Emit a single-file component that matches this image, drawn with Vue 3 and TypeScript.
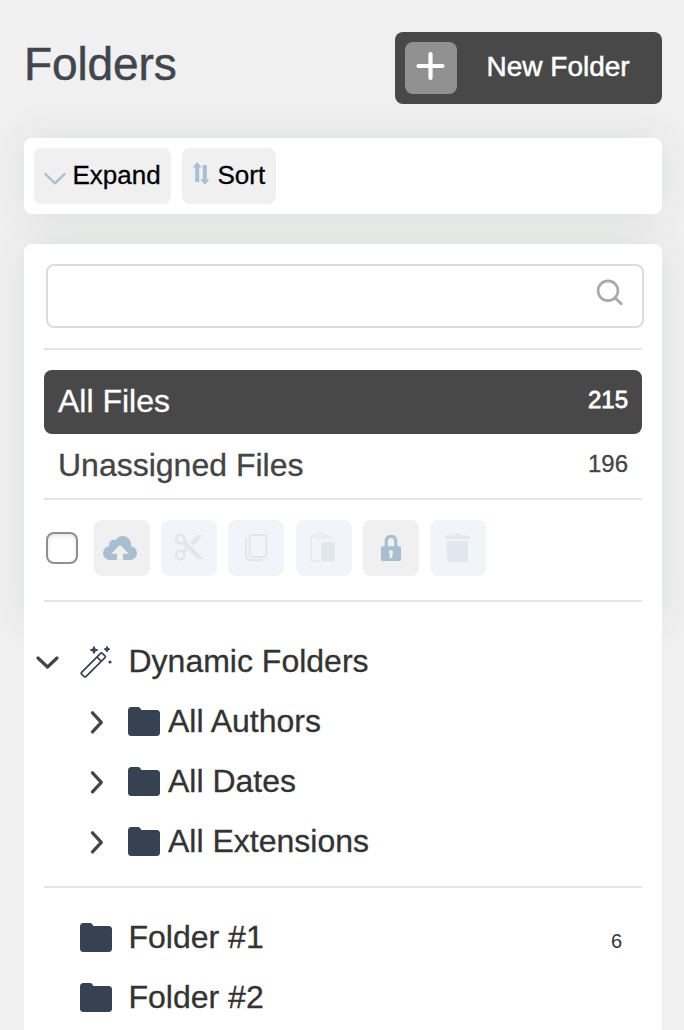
<script setup lang="ts">
interface TreeItem {
  name: string
  count?: number
}

const dynamicChildren: TreeItem[] = [
  { name: 'All Authors' },
  { name: 'All Dates' },
  { name: 'All Extensions' },
]

const folders: TreeItem[] = [
  { name: 'Folder #1', count: 6 },
  { name: 'Folder #2' },
]

const folderPath =
  'M3.5 0H10Q11.5 0 12.3 1.3L13 2.4Q13.4 3 14.2 3H28.5Q32 3 32 6.5V25.5Q32 29 28.5 29H3.5Q0 29 0 25.5V3.5Q0 0 3.5 0Z'
</script>

<template>
  <main class="page">
    <header class="header">
      <h1>Folders</h1>
      <button class="new-folder">
        <span class="plus">
          <svg width="52" height="52" viewBox="0 0 52 52">
            <path d="M25.5 12V36M13.5 24H37.5" fill="none" stroke="#fff" stroke-width="4.2" stroke-linecap="round" />
          </svg>
        </span>
        <span class="new-label">New Folder</span>
      </button>
    </header>

    <section class="actions">
      <button class="action expand">
        <svg width="22" height="56" viewBox="0 0 22 56">
          <path d="M1.5 26L11 35.3L20.5 26" fill="none" stroke="#a9bfd1" stroke-width="2.4" stroke-linecap="round" stroke-linejoin="round" />
        </svg>
        <span>Expand</span>
      </button>
      <button class="action sort">
        <svg width="18" height="56" viewBox="0 0 18 56">
          <path d="M5.2 14L9.8 19.6H7.2V34H3.2V19.6H.6ZM10.8 17H14.8V31.2H17.4L12.8 36.8L8.2 31.2H10.8Z" fill="#a9bfd1" />
        </svg>
        <span>Sort</span>
      </button>
    </section>

    <section class="panel">
      <div class="search">
        <input type="text" aria-label="Search" />
        <svg class="search-icon" width="30" height="30" viewBox="0 0 30 30">
          <circle cx="12" cy="12.7" r="9.9" fill="none" stroke="#aaa" stroke-width="2.7" />
          <path d="M19 19.7L25.2 25.7" stroke="#aaa" stroke-width="2.9" stroke-linecap="round" />
        </svg>
      </div>
      <div class="divider"></div>
      <div class="summary selected"><span>All Files</span><b>215</b></div>
      <div class="summary"><span>Unassigned Files</span><b>196</b></div>
      <div class="divider"></div>
      <div class="tools">
        <input class="check" type="checkbox" aria-label="Select" />
        <button class="tool">
          <svg viewBox="0 0 56 56">
            <g fill="#a9bfd1">
              <circle cx="16" cy="33" r="7" />
              <circle cx="36" cy="33" r="7" />
              <circle cx="20" cy="24.8" r="5" />
              <circle cx="28.8" cy="24.4" r="8.4" />
              <rect x="16" y="25" width="20" height="15" />
            </g>
            <path d="M26 25L34.8 33.8H29V40.5H23V33.8H17.2Z" fill="#f0f0f0" />
          </svg>
        </button>
        <button class="tool disabled">
          <svg viewBox="0 0 56 56">
            <g fill="none" stroke="#e2e6ec" stroke-width="2.6">
              <circle cx="19.3" cy="19.2" r="4.2" />
              <circle cx="19.3" cy="35" r="4.2" />
            </g>
            <path d="M23.5 19.5L41.2 37.6V39H36.6L27.4 30L22.5 34.8L20.2 31.6L24.6 27.2L20.2 22.6ZM29 22.6L36.6 15H41.2V16.2L31.8 25.6Z" fill="#e2e6ec" />
          </svg>
        </button>
        <button class="tool disabled">
          <svg viewBox="0 0 56 56" fill="none" stroke="#e2e6ec" stroke-width="1.8">
            <rect x="21.6" y="15" width="16.6" height="22" rx="2.5" />
            <path d="M18 18V35Q18 40 23 40H33Q34 40 34.6 39" />
          </svg>
        </button>
        <button class="tool disabled">
          <svg viewBox="0 0 56 56">
            <path d="M20 16H17Q15 16 15 18V39Q15 41 17 41H23M29 16H32Q34.5 16 34.5 18V20" fill="none" stroke="#e4e7ed" stroke-width="1.4" />
            <rect x="20" y="14.3" width="9" height="3.6" rx="1.8" fill="none" stroke="#e4e7ed" stroke-width="1.4" />
            <rect x="25" y="22.2" width="14" height="19.2" rx="2.3" fill="#e2e6ee" />
          </svg>
        </button>
        <button class="tool">
          <svg viewBox="0 0 56 56">
            <path d="M23.2 28V22Q23.2 16.4 28 16.4Q32.8 16.4 32.8 22V28" fill="none" stroke="#a9bfd1" stroke-width="3.2" />
            <rect x="18" y="26.3" width="20" height="14.7" rx="1.6" fill="#a9bfd1" />
            <path d="M28 30A2.3 2.3 0 0 1 29.3 34.1V38H26.7V34.1A2.3 2.3 0 0 1 28 30Z" fill="#f0f0f0" />
          </svg>
        </button>
        <button class="tool disabled">
          <svg viewBox="0 0 56 56">
            <path d="M15 15.6H24L25 13.8H30L31 15.6H40V19H15ZM17 21H38V38.5Q38 42 34.5 42H20.5Q17 42 17 38.5Z" fill="#e2e6ee" />
          </svg>
        </button>
      </div>
      <div class="divider"></div>
    </section>

    <section class="tree">
      <div class="row root">
        <svg class="chev-down" width="24" height="16" viewBox="0 0 24 16">
          <path d="M2 4L11.5 13L21 4" fill="none" stroke="#444" stroke-width="3.2" stroke-linecap="round" stroke-linejoin="round" />
        </svg>
        <svg class="wand" width="32" height="32" viewBox="0 0 32 32">
          <g fill="none" stroke="#364152" stroke-width="1.7" stroke-linejoin="round">
            <path d="M1.6 26.4L20.6 7.3Q21.5 6.5 22.4 7.3L25 9.8Q25.8 10.7 25 11.6L5.9 30.6Q5 31.3 4.1 30.5L1.6 28.1Q.8 27.3 1.6 26.4Z" />
            <path d="M17 11L21.3 15.3" />
          </g>
          <path d="M14 .5L15.1 3L17.7 4L15.1 5.1L14 7.6L12.9 5.1L10.3 4L12.9 3ZM27 .4L27.9 2.3L29.9 3.2L27.9 4.1L27 6L26.1 4.1L24.1 3.2L26.1 2.3Z" fill="#364152" stroke="#364152" stroke-width="1" stroke-linejoin="round" />
          <circle cx="30" cy="16" r="1.6" fill="#364152" />
        </svg>
        <span class="label">Dynamic Folders</span>
      </div>
      <div v-for="item in dynamicChildren" :key="item.name" class="row child">
        <svg class="chev-right" width="16" height="24" viewBox="0 0 16 24">
          <path d="M4.5 2.8L13.3 12.3L4.5 21.8" fill="none" stroke="#444" stroke-width="3.2" stroke-linecap="round" stroke-linejoin="round" />
        </svg>
        <svg class="folder" width="32" height="29" viewBox="0 0 32 29"><path :d="folderPath" fill="#364152" /></svg>
        <span class="label">{{ item.name }}</span>
      </div>
      <div class="divider tree-divider"></div>
      <div v-for="item in folders" :key="item.name" class="row plain">
        <svg class="folder" width="32" height="29" viewBox="0 0 32 29"><path :d="folderPath" fill="#364152" /></svg>
        <span class="label">{{ item.name }}</span>
        <span v-if="item.count" class="count">{{ item.count }}</span>
      </div>
    </section>
  </main>
</template>

<style>
body {
  background: #f0f0f0;
}
</style>

<style scoped>
.page {
  box-sizing: border-box;
  width: 684px;
  height: 1030px;
  padding: 32px 22px 0 24px;
  overflow: hidden;
  background: #f0f0f0;
  font-family: "Liberation Sans", Arial, Helvetica, sans-serif;
  color: #333;
}
svg {
  display: block;
  flex: none;
}
button {
  border: 0;
  padding: 0;
  font-family: inherit;
}
.header {
  display: flex;
  justify-content: space-between;
  height: 72px;
  margin-bottom: 34px;
}
h1 {
  margin: 0;
  font-size: 46px;
  font-weight: 400;
  line-height: 64px;
  letter-spacing: -0.1px;
  color: #40464d;
  -webkit-text-stroke: 0.5px #40464d;
}
.new-folder {
  display: flex;
  align-items: flex-start;
  box-sizing: border-box;
  width: 267px;
  height: 72px;
  padding: 10px;
  border-radius: 8px;
  background: #484848;
  color: #fff;
}
.plus {
  width: 52px;
  height: 52px;
  border-radius: 8px;
  background: #919191;
}
.new-label {
  margin-left: 29.5px;
  font-size: 28px;
  line-height: 50px;
  white-space: nowrap;
  -webkit-text-stroke: 0.5px #fff;
}
.actions {
  position: relative;
  z-index: 1;
  display: flex;
  gap: 11px;
  box-sizing: border-box;
  height: 76px;
  padding: 10px;
  margin-bottom: 30px;
  border-radius: 8px;
  background: #fff;
  box-shadow: 0 0 40px rgba(0, 50, 38, 0.09);
}
.action {
  display: flex;
  height: 56px;
  border-radius: 8px;
  background: #f0f0f0;
  font-size: 26px;
  line-height: 54px;
  color: #000;
  -webkit-text-stroke: 0.3px #000;
}
.expand {
  width: 137px;
  padding-left: 10px;
  gap: 6.5px;
}
.sort {
  width: 94px;
  padding-left: 10px;
  gap: 7.5px;
}
.panel {
  box-sizing: border-box;
  height: 378px;
  padding: 20px 20px 0;
  border-radius: 8px 8px 0 0;
  background: #fff;
  box-shadow: 0 0 40px rgba(0, 50, 38, 0.09);
}
.search {
  position: relative;
  width: 598px;
  height: 64px;
  margin: 0 0 20px 2px;
}
.search input {
  box-sizing: border-box;
  display: block;
  width: 100%;
  height: 100%;
  margin: 0;
  border: 2px solid #dcdcdc;
  border-radius: 8px;
  background: #fff;
}
.search-icon {
  position: absolute;
  top: 14px;
  right: 18px;
}
.divider {
  height: 2px;
  background: #e5e5e5;
}
.summary {
  display: flex;
  justify-content: space-between;
  height: 64px;
  padding: 0 14px;
  border-radius: 8px;
  font-size: 32px;
  line-height: 62px;
  color: #444;
  -webkit-text-stroke: 0.3px currentColor;
}
.summary b {
  font-size: 24px;
  font-weight: 400;
  line-height: 60px;
}
.selected {
  margin-top: 20px;
  background: #484848;
  color: #fff;
}
.selected b {
  -webkit-text-stroke: 0.8px #fff;
}
.tools {
  display: flex;
  align-items: center;
  gap: 11.2px;
  height: 56px;
  padding: 20px 0 24px 2px;
}
.check {
  appearance: none;
  box-sizing: border-box;
  width: 32px;
  height: 32px;
  margin: 0 4.8px 0 0;
  border: 2px solid #8c8f94;
  border-radius: 8px;
  background: #fff;
  box-shadow: inset 0 2px 4px rgba(0, 0, 0, 0.1);
}
.tool {
  width: 56px;
  height: 56px;
  border-radius: 8px;
  background: #f0f0f0;
}
.tool.disabled {
  background: #f1f5fa;
}
.tree {
  position: relative;
  height: 408px;
  padding: 10px 20px 0 12px;
  background: #fff;
}
.row {
  display: flex;
  align-items: center;
  height: 60px;
  font-size: 32px;
  line-height: 60px;
}
.label {
  padding-bottom: 2px;
  white-space: nowrap;
  -webkit-text-stroke: 0.3px currentColor;
}
.wand {
  margin: 0 16.5px 0 20px;
}
.child {
  padding-left: 52px;
}
.chev-right {
  margin-right: 24px;
}
.folder {
  margin-bottom: 1px;
}
.child .folder {
  margin-right: 8px;
}
.tree-divider {
  margin: 14px 0 20px 8px;
}
.plain {
  padding-left: 44px;
}
.plain .folder {
  margin-right: 16.5px;
}
.count {
  margin: 6px 20px 0 auto;
  font-size: 20px;
}
</style>
